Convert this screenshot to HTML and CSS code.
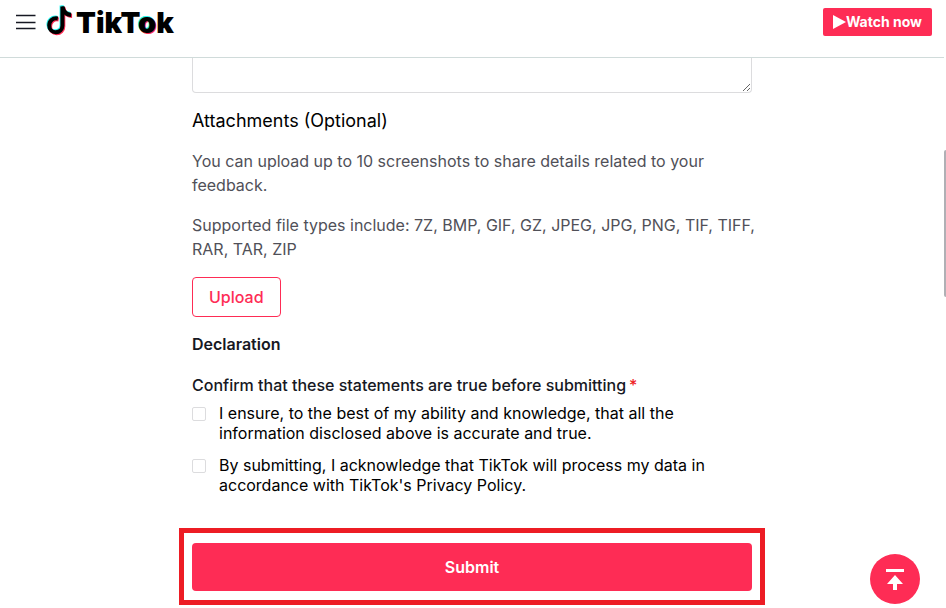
FILE: index.html
```html
<!DOCTYPE html>
<html lang="en">
<head>
<meta charset="utf-8">
<meta name="viewport" content="width=device-width, initial-scale=1">
<title>Share your feedback | TikTok</title>
<link rel="stylesheet" href="styles.css">
</head>
<body>
<header class="topbar">
  <button class="menu" type="button" aria-label="Menu">
    <svg width="20" height="16" viewBox="0 0 20 16" fill="none" stroke="#161823" stroke-width="1.3"><path d="M0 1.5h19.5M0 8.5h19.5M0 14.5h19.5"/></svg>
  </button>
  <a class="brand" href="#">
    <svg width="28" height="31" viewBox="0 0 28 31" fill="none" aria-hidden="true">
      <defs>
        <g id="note">
          <path d="M11.6 13.4C6.4 12.4 3 16.2 3 20.4c0 3.9 3 6.7 6.6 6.7 3.7 0 6.6-2.9 6.6-6.6V1.4" fill="none" stroke-width="4"/>
          <path d="M15.6 1.4h2.8c.4 3.8 3.1 6 6.6 6.3v4.2c-3-.1-5.2-1-7-2.4l-2.4-2z" stroke="none"/>
        </g>
      </defs>
      <use href="#note" x="-.6" y="-.8" stroke="#25f4ee" fill="#25f4ee"/>
      <use href="#note" x="1.1" y="1.1" stroke="#fe2c55" fill="#fe2c55"/>
      <use href="#note" x=".2" y=".1" stroke="#000" fill="#000"/>
    </svg>
    <span class="wordmark">TikT<span class="wordmark-o">o</span>k</span>
  </a>
  <a class="watch" href="#">
    <svg width="13" height="14" viewBox="0 0 13 14" fill="#fff" aria-hidden="true"><path d="M0 0l13 7-13 7z"/></svg>Watch now
  </a>
</header>
<main class="page">
  <form class="form">
    <textarea class="details" aria-label="Details"></textarea>
    <h2 class="heading">Attachments (Optional)</h2>
    <p class="hint">You can upload up to 10 screenshots to share details related to your feedback.</p>
    <p class="hint">Supported file types include: 7Z, BMP, GIF, GZ, JPEG, JPG, PNG, TIF, TIFF, RAR, TAR, ZIP</p>
    <button class="upload" type="button">Upload</button>
    <h3 class="subheading">Declaration</h3>
    <fieldset class="statements">
      <legend>Confirm that these statements are true before submitting<span class="required">*</span></legend>
      <div class="statement">
        <input type="checkbox" id="accurate">
        <label for="accurate">I ensure, to the best of my ability and knowledge, that all the information disclosed above is accurate and true.</label>
      </div>
      <div class="statement">
        <input type="checkbox" id="privacy">
        <label for="privacy">By submitting, I acknowledge that TikTok will process my data in accordance with TikTok's Privacy Policy.</label>
      </div>
    </fieldset>
    <div class="highlight"><button class="submit" type="submit">Submit</button></div>
  </form>
</main>
<button class="to-top" type="button" aria-label="Back to top">
  <svg width="18" height="22" viewBox="0 0 18 22" fill="#fff"><path d="M0 1h18v3H0zM9 7l8 9h-6v6H7v-6H1z"/></svg>
</button>
<div class="scroll-thumb"></div>
</body>
</html>
```
FILE: styles.css
```css
* { box-sizing: border-box; }

body {
  margin: 0;
  padding-right: 2px;
  background: #fff;
  color: #161823;
  font: 16px/24px Inter, "Noto Sans", sans-serif;
}

button { font: inherit; cursor: pointer; }

.topbar {
  display: flex;
  align-items: flex-start;
  height: 58px;
  padding: 0 12px 0 16px;
  border-bottom: 1px solid #d0dbda;
}

.menu {
  display: flex;
  margin-top: 14px;
  padding: 0;
  border: 0;
  background: none;
}

.brand {
  display: flex;
  gap: 2px;
  margin: 5px auto 0 10px;
  color: #000;
  text-decoration: none;
}

.wordmark {
  font-size: 29px;
  font-weight: 900;
  line-height: 36px;
}

.wordmark-o { text-shadow: -1px -1px #25f4ee, 1px 1px #fe2c55; }

.watch {
  display: flex;
  align-items: center;
  margin-top: 8px;
  padding: 0 10px;
  border-radius: 2px;
  background: #fe2c55;
  color: #fff;
  font: 700 14px/28px Inter, sans-serif;
  text-decoration: none;
}

.form {
  display: flex;
  flex-direction: column;
  align-items: flex-start;
  width: 100%;
  max-width: 560px;
  margin: 0 auto;
}

.details {
  width: 100%;
  height: 35px;
  border: 1px solid #dcdcde;
  border-top: 0;
  border-radius: 0 0 4px 4px;
  background: #fff;
  resize: both;
}

.heading {
  margin: 15px 0;
  color: #000;
  font-size: 18px;
  font-weight: 400;
  line-height: 26px;
}

.hint {
  margin: 0 -8px 16px 0;
  color: #505058;
}

.upload {
  height: 40px;
  padding: 0 16px;
  border: 1px solid #fe2c55;
  border-radius: 4px;
  background: #fff;
  color: #fe2c55;
  font-weight: 500;
}

.subheading {
  margin: 15px 0 17px;
  font-size: 16px;
  font-weight: 600;
  line-height: 24px;
}

.statements {
  width: 100%;
  margin: 0;
  padding: 0;
  border: 0;
}

.statements legend {
  padding: 0;
  margin-bottom: 6px;
  font-weight: 500;
}

.required {
  margin-left: 3px;
  color: #ee1d24;
}

.statement {
  display: flex;
  gap: 13px;
  margin-bottom: 12px;
  color: #000;
  line-height: 20px;
}

.statement input {
  flex: none;
  width: 14px;
  height: 14px;
  margin: 4px 0 0;
  border: 1px solid #dcdcde;
  border-radius: 2px;
  appearance: none;
  background: #fff;
}

.highlight {
  align-self: stretch;
  margin: 21px -13px 0;
  padding: 10px 8px 9px;
  border: 5px solid #ed1c24;
}

.submit {
  display: block;
  width: 100%;
  height: 48px;
  border: 0;
  border-radius: 4px;
  background: #fe2c55;
  color: #fff;
  font-weight: 600;
}

.to-top {
  position: fixed;
  right: 26px;
  bottom: 4px;
  display: flex;
  align-items: center;
  justify-content: center;
  width: 50px;
  height: 50px;
  padding: 0;
  border: 0;
  border-radius: 50%;
  background: #fe2c55;
}

.scroll-thumb {
  position: fixed;
  top: 150px;
  right: 0;
  width: 2px;
  height: 147px;
  border-radius: 2px 0 0 2px;
  background: #b0b0b5;
}
```
